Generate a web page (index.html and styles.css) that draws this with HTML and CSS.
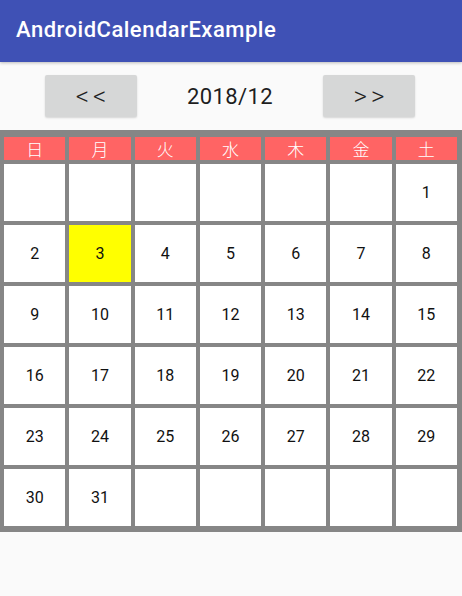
FILE: index.html
```html
<!DOCTYPE html>
<html lang="ja">
<head>
<meta charset="utf-8">
<title>AndroidCalendarExample</title>
<link rel="stylesheet" href="styles.css">
</head>
<body>
<header class="appbar">
  <h1 class="appbar-title">AndroidCalendarExample</h1>
</header>
<main>
  <div class="nav">
    <button class="nav-btn">&lt;&lt;</button>
    <div class="month">2018/12</div>
    <button class="nav-btn">&gt;&gt;</button>
  </div>
  <div class="calendar">
    <div class="wd">日</div><div class="wd">月</div><div class="wd">火</div><div class="wd">水</div><div class="wd">木</div><div class="wd">金</div><div class="wd">土</div>
    <div class="day"></div><div class="day"></div><div class="day"></div><div class="day"></div><div class="day"></div><div class="day"></div><div class="day">1</div>
    <div class="day">2</div><div class="day today">3</div><div class="day">4</div><div class="day">5</div><div class="day">6</div><div class="day">7</div><div class="day">8</div>
    <div class="day">9</div><div class="day">10</div><div class="day">11</div><div class="day">12</div><div class="day">13</div><div class="day">14</div><div class="day">15</div>
    <div class="day">16</div><div class="day">17</div><div class="day">18</div><div class="day">19</div><div class="day">20</div><div class="day">21</div><div class="day">22</div>
    <div class="day">23</div><div class="day">24</div><div class="day">25</div><div class="day">26</div><div class="day">27</div><div class="day">28</div><div class="day">29</div>
    <div class="day">30</div><div class="day">31</div><div class="day"></div><div class="day"></div><div class="day"></div><div class="day"></div><div class="day"></div>
  </div>
</main>
</body>
</html>
```

FILE: styles.css
```css
html, body {
  margin: 0;
  padding: 0;
}
body {
  background: #fafafa;
  font-family: Roboto, "Noto Sans CJK JP", sans-serif;
  color: #212121;
  width: 462px;
  height: 596px;
  overflow: hidden;
}
.appbar {
  height: 62px;
  background: #3f51b5;
  display: flex;
  align-items: center;
  padding-left: 16px;
  box-shadow: 0 1px 3px rgba(0,0,0,0.25);
  position: relative;
}
.appbar-title {
  margin: 0;
  color: #fff;
  font-size: 22px;
  font-weight: 500;
  letter-spacing: 0.5px;
  line-height: 1;
  position: relative;
  top: -1px;
}
.nav {
  display: flex;
  align-items: center;
  padding: 13px 0 13px 45px;
  height: 42px;
}
.nav-btn {
  width: 92px;
  height: 42px;
  border: none;
  border-radius: 2px;
  background: #d6d7d7;
  box-shadow: 0 1px 2px rgba(0,0,0,0.15);
  font-family: Roboto, sans-serif;
  font-size: 26px;
  font-weight: 300;
  letter-spacing: 4px;
  line-height: 1;
  color: #222;
  padding: 0 0 0 4px;
}
.month {
  width: 186px;
  text-align: center;
  font-size: 22px;
  letter-spacing: 0.4px;
  color: #1e1e1e;
}
.calendar {
  background: #868686;
  display: grid;
  grid-template-columns: repeat(7, 1fr);
  grid-template-rows: 23px repeat(6, 57px);
  gap: 4px;
  padding: 7px 5px 6px 4px;
}
.wd {
  background: #ff6464;
  color: #fff;
  font-size: 17px;
  font-weight: 300;
  display: flex;
  align-items: center;
  justify-content: center;
  font-family: "Noto Sans CJK JP", sans-serif;
}
.day {
  background: #fff;
  display: flex;
  align-items: center;
  justify-content: center;
  font-size: 16px;
  color: #111;
}
.today {
  background: #ffff00;
}
```
